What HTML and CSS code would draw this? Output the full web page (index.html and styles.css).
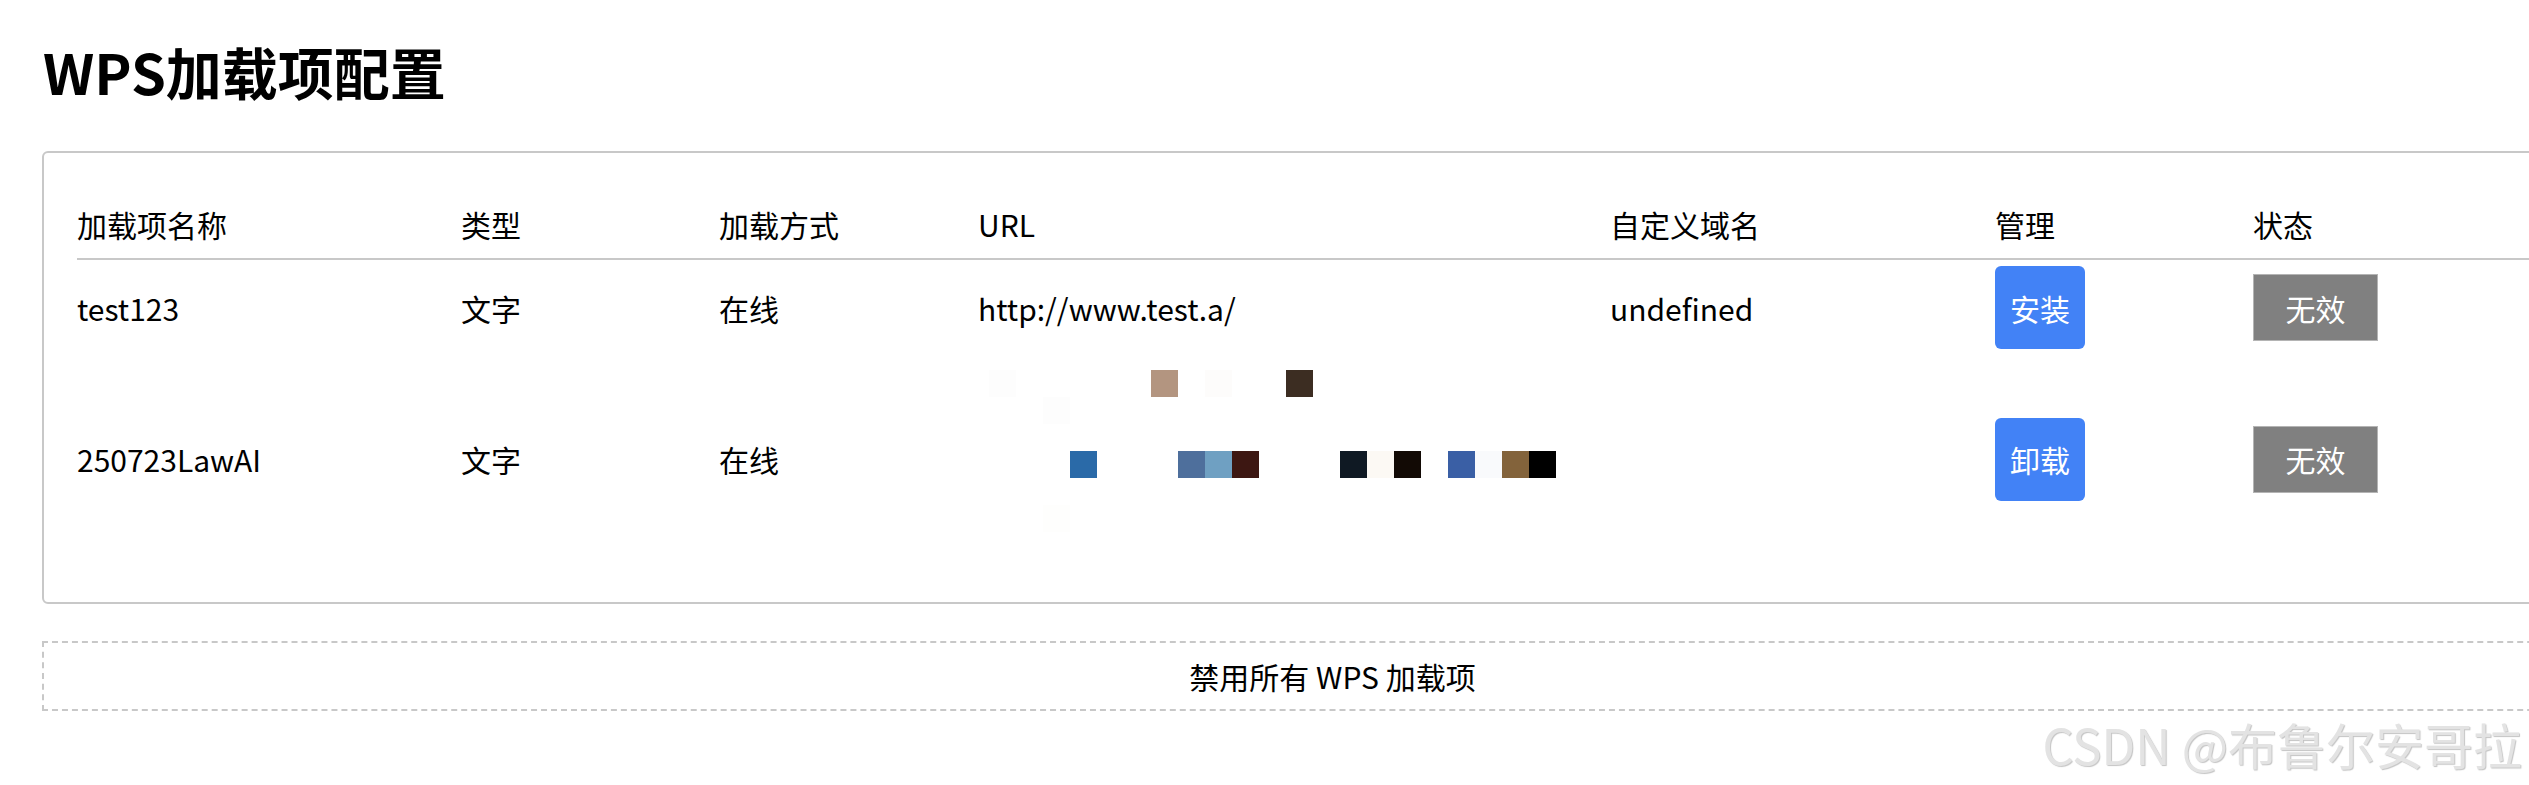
FILE: index.html
```html
<!DOCTYPE html>
<html lang="zh-CN">
<head>
<meta charset="utf-8">
<title>WPS加载项配置</title>
<link rel="stylesheet" href="styles.css">
</head>
<body>
<main class="page">
  <h1 class="title">WPS加载项配置</h1>
  <section class="card">
    <table class="addons">
      <colgroup>
        <col class="w-name"><col class="w-type"><col class="w-mode"><col class="w-url"><col class="w-domain"><col class="w-manage"><col class="w-state">
      </colgroup>
      <thead>
        <tr>
          <th>加载项名称</th><th>类型</th><th>加载方式</th><th>URL</th><th>自定义域名</th><th>管理</th><th>状态</th>
        </tr>
      </thead>
      <tbody>
        <tr>
          <td>test123</td>
          <td>文字</td>
          <td>在线</td>
          <td>http://www.test.a/</td>
          <td>undefined</td>
          <td><button class="btn-primary">安装</button></td>
          <td><span class="state">无效</span></td>
        </tr>
        <tr>
          <td>250723LawAI</td>
          <td>文字</td>
          <td>在线</td>
          <td>
            <div class="mosaic" aria-label="已打码的URL">
              <i class="r0 c0 m-f1"></i><i class="r0 c6 m-tan"></i><i class="r0 c8 m-f2"></i><i class="r0 c11 m-brown"></i>
              <i class="r1 c2 m-f1"></i>
              <i class="r3 c3 m-blue"></i><i class="r3 c7 m-steel"></i><i class="r3 c8 m-sky"></i><i class="r3 c9 m-maroon"></i>
              <i class="r3 c13 m-navy"></i><i class="r3 c14 m-cream"></i><i class="r3 c15 m-ink"></i>
              <i class="r3 c17 m-royal"></i><i class="r3 c18 m-ice"></i><i class="r3 c19 m-bronze"></i><i class="r3 c20 m-black"></i>
              <i class="r5 c2 m-f3"></i>
            </div>
          </td>
          <td></td>
          <td><button class="btn-primary">卸载</button></td>
          <td><span class="state">无效</span></td>
        </tr>
      </tbody>
    </table>
  </section>
  <button class="disable-all">禁用所有 WPS 加载项</button>
</main>
<div class="watermark">CSDN @布鲁尔安哥拉</div>
</body>
</html>
```

FILE: styles.css
```css
html {
  overflow: hidden;
  background: #fff;
}

body {
  margin: 0;
  font-family: "Noto Sans CJK SC", "Noto Sans", sans-serif;
  color: #000;
  font-size: 30px;
}

.page {
  width: 2581px;
  padding: 30px 0 0 42px;
}

.title {
  margin: 0 0 40px;
  font-size: 56px;
  font-weight: 700;
  line-height: 81px;
  padding-left: 1px;
}

.card {
  border: 2px solid #c8c8c8;
  border-radius: 6px;
  padding: 33px 33px 39px;
}

.addons {
  width: 100%;
  border-collapse: collapse;
  table-layout: fixed;
}

.w-name { width: 384px; }
.w-type { width: 258px; }
.w-mode { width: 259px; }
.w-url { width: 632px; }
.w-domain { width: 385px; }
.w-manage { width: 258px; }
.w-state { width: auto; }

.addons th {
  text-align: left;
  font-weight: 400;
  line-height: 44px;
  padding: 16px 0 12px;
  border-bottom: 2px solid #c8c8c8;
}

.addons td {
  line-height: 44px;
  padding: 6px 0;
  vertical-align: middle;
  white-space: nowrap;
}

.btn-primary {
  font: inherit;
  font-size: 30px;
  width: 90px;
  height: 83px;
  border: none;
  border-radius: 6px;
  background: #4282f6;
  color: #fff;
  padding: 0;
  display: flex;
  align-items: center;
  justify-content: center;
  line-height: 1;
}

.state {
  display: flex;
  align-items: center;
  justify-content: center;
  width: 125px;
  height: 67px;
  box-sizing: border-box;
  border: 1px solid #b4b4b4;
  background: #808080;
  color: #fff;
  line-height: 1;
}

.mosaic {
  display: grid;
  grid-template-columns: repeat(21, 27px);
  grid-template-rows: repeat(6, 27px);
  padding: 9px 0 25px 11px;
}

.mosaic i { display: block; }

.r0 { grid-row: 1; }
.r1 { grid-row: 2; }
.r3 { grid-row: 4; }
.r5 { grid-row: 6; }
.c0 { grid-column: 1; }
.c2 { grid-column: 3; }
.c3 { grid-column: 4; }
.c6 { grid-column: 7; }
.c7 { grid-column: 8; }
.c8 { grid-column: 9; }
.c9 { grid-column: 10; }
.c11 { grid-column: 12; }
.c13 { grid-column: 14; }
.c14 { grid-column: 15; }
.c15 { grid-column: 16; }
.c17 { grid-column: 18; }
.c18 { grid-column: 19; }
.c19 { grid-column: 20; }
.c20 { grid-column: 21; }

.m-f1 { background: #fdfdfd; }
.m-f2 { background: #fdfcfb; }
.m-f3 { background: #fefefd; }
.m-tan { background: #b39580; }
.m-brown { background: #3c2d22; }
.m-blue { background: #2a6aa8; }
.m-steel { background: #4e6f9c; }
.m-sky { background: #6fa0c2; }
.m-maroon { background: #3d1712; }
.m-navy { background: #0f1923; }
.m-cream { background: #fcf9f4; }
.m-ink { background: #120a05; }
.m-royal { background: #3a5fa5; }
.m-ice { background: #f9fafc; }
.m-bronze { background: #83633b; }
.m-black { background: #000; }

.disable-all {
  display: block;
  width: 100%;
  margin-top: 37px;
  height: 70px;
  font: inherit;
  font-size: 30px;
  color: #000;
  background: #fff;
  border: 2px dashed #c8c8c8;
  padding: 0;
  cursor: pointer;
}

.watermark {
  position: absolute;
  right: 7px;
  top: 708px;
  font-family: "Liberation Sans Narrow", "Noto Sans CJK SC", sans-serif;
  font-size: 49px;
  color: #e3e3e3;
  text-shadow: 1px 1px 1px #c4c4c4;
  pointer-events: none;
}
```
